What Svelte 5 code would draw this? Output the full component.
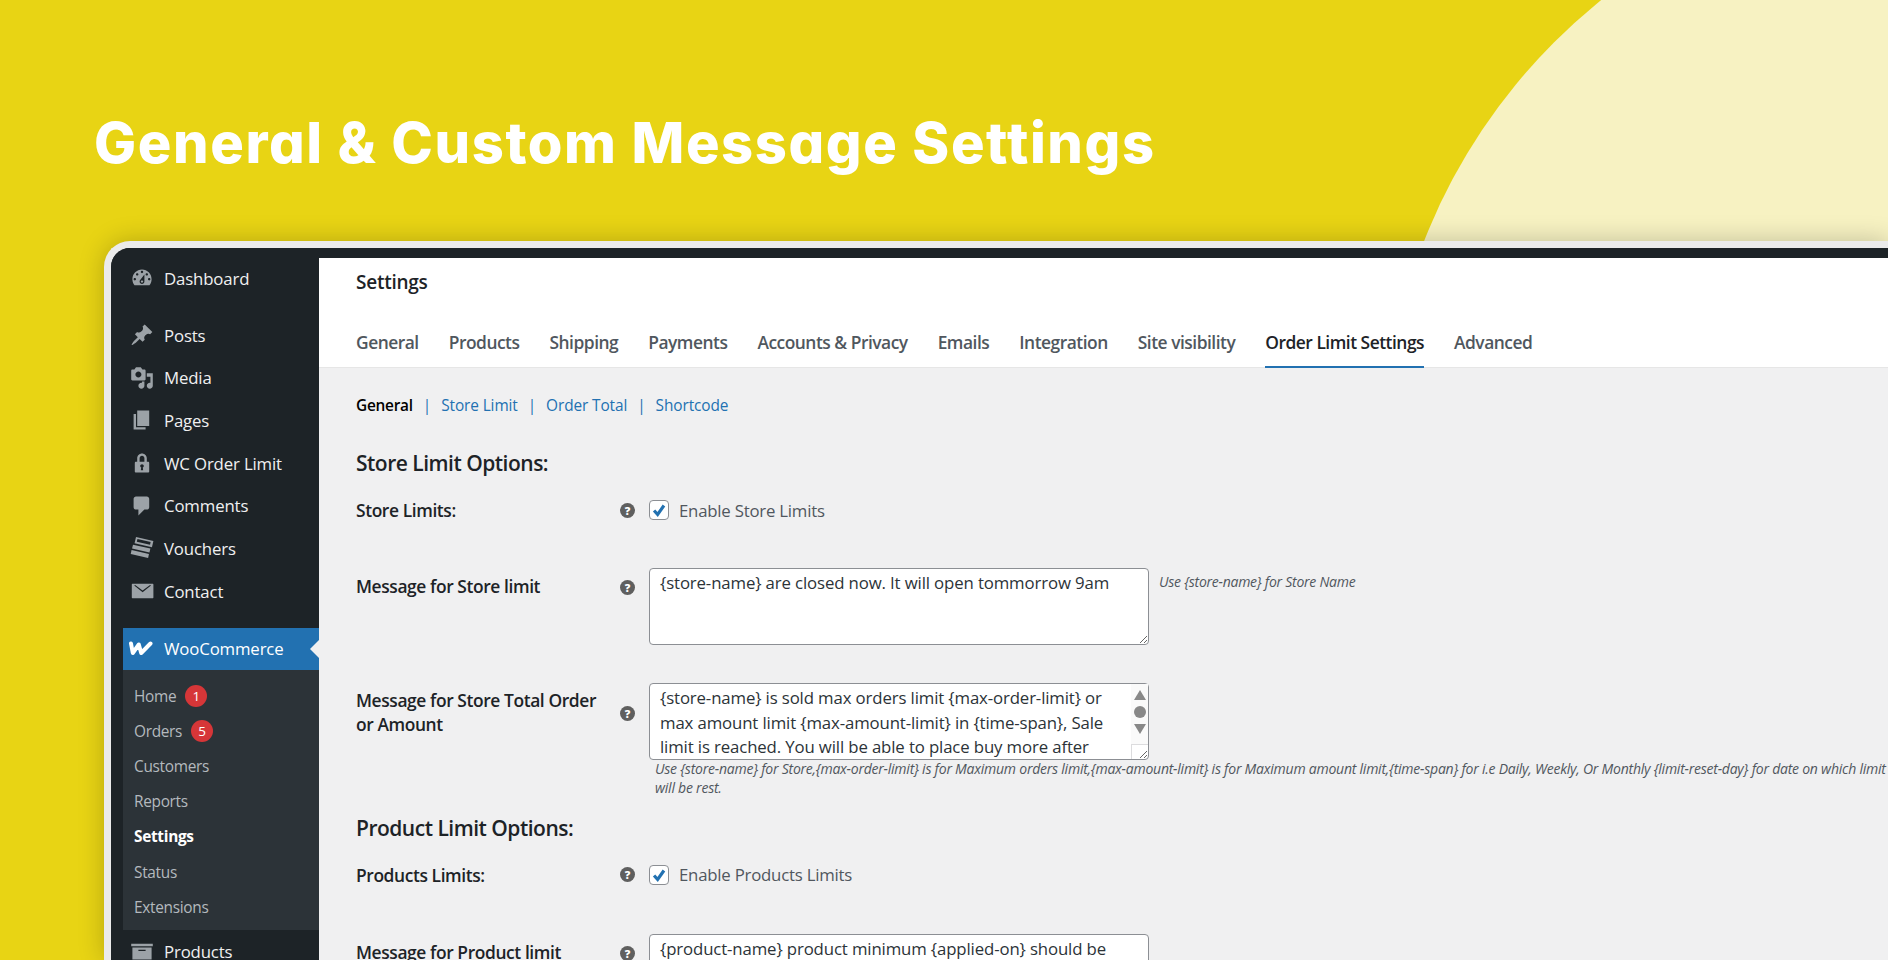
<script>
  const menuTop = [
    { label: 'Dashboard', icon: 'M3.76 16h12.48c1.1-1.37 1.76-3.11 1.76-5 0-4.42-3.58-8-8-8s-8 3.58-8 8c0 1.89.66 3.63 1.76 5zM10 4c.55 0 1 .45 1 1s-.45 1-1 1-1-.45-1-1 .45-1 1-1zM6 6c.55 0 1 .45 1 1s-.45 1-1 1-1-.45-1-1 .45-1 1-1zm8 0c.55 0 1 .45 1 1s-.45 1-1 1-1-.45-1-1 .45-1 1-1zm-5.37 5.55L12 7v6c0 1.1-.9 2-2 2s-2-.9-2-2c0-.57.24-1.08.63-1.45zM4 10c.55 0 1 .45 1 1s-.45 1-1 1-1-.45-1-1 .45-1 1-1zm12 0c.55 0 1 .45 1 1s-.45 1-1 1-1-.45-1-1 .45-1 1-1zm-5 3c0-.55-.45-1-1-1s-1 .45-1 1 .45 1 1 1 1-.45 1-1z' }
  ]
  const menuMain = [
    { label: 'Posts', icon: 'M10.44 3.02l1.82-1.82 6.36 6.35-1.83 1.82c-1.05-.68-2.48-.57-3.41.36l-.75.75c-.92.93-1.04 2.35-.35 3.41l-1.83 1.82-2.41-2.41-2.8 2.79c-.42.42-3.38 2.71-3.8 2.29s1.86-3.39 2.28-3.81l2.79-2.79L4.1 9.36l1.83-1.82c1.05.69 2.48.57 3.4-.36l.75-.75c.93-.92 1.05-2.35.36-3.41z' },
    { label: 'Media', icon: 'M13 11V4c0-.55-.45-1-1-1h-1.67L9 1H5L3.67 3H2c-.55 0-1 .45-1 1v7c0 .55.45 1 1 1h10c.55 0 1-.45 1-1zM7 4.5c1.38 0 2.5 1.12 2.5 2.5S8.38 9.5 7 9.5 4.5 8.38 4.5 7 5.62 4.5 7 4.5zM14 6h5v10.5c0 1.38-1.12 2.5-2.5 2.5S14 17.88 14 16.5s1.12-2.5 2.5-2.5c.17 0 .34.02.5.05V9h-3V6zm-4 8.05V13h2v3.5c0 1.38-1.12 2.5-2.5 2.5S7 17.88 7 16.5 8.12 14 9.5 14c.17 0 .34.02.5.05z' },
    { label: 'Pages', icon: 'M6 15V2h10v13H6zm-1 1h8v2H3V5h2v11z' },
    { label: 'WC Order Limit', icon: 'M14 9h1c.55 0 1 .45 1 1v7c0 .55-.45 1-1 1H5c-.55 0-1-.45-1-1v-7c0-.55.45-1 1-1h1V6c0-2.21 1.79-4 4-4s4 1.79 4 4v3zm-2 0V6c0-1.1-.9-2-2-2s-2 .9-2 2v3h4zm-1 7l-.36-2.15c.51-.24.86-.75.86-1.35 0-.83-.67-1.5-1.5-1.5s-1.5.67-1.5 1.5c0 .6.35 1.11.86 1.35L9 16h2z' },
    { label: 'Comments', icon: 'M5 2h9c1.1 0 2 .9 2 2v7c0 1.1-.9 2-2 2h-2l-5 5v-5H5c-1.1 0-2-.9-2-2V4c0-1.1.9-2 2-2z' },
    { label: 'Vouchers', icon: 'M5 .8l14.500 3.300-1.200 5.200L3.800 6zM6.200 2.500l-.5 2.300 11 2.500.5-2.300zM2.500 7.200l14.500 3.300-.8 3.300L1.700 10.500zM1.300 11.700l14.500 3.300-.7 3.300L.6 15z' },
    { label: 'Contact', icon: 'M2 4h17c.3 0 .5.2.5.5v11c0 .3-.2.5-.5.5H2c-.3 0-.5-.2-.5-.5v-11c0-.3.2-.5.5-.5zm1.500 1.500l7 5.500 7-5.500-.8-.5L10.500 9.500 4.300 5z' }
  ]
  const subMenu = [
    { label: 'Home', badge: 1 },
    { label: 'Orders', badge: 5 },
    { label: 'Customers' },
    { label: 'Reports' },
    { label: 'Settings', current: true },
    { label: 'Status' },
    { label: 'Extensions' }
  ]
  const tabs = ['General', 'Products', 'Shipping', 'Payments', 'Accounts & Privacy', 'Emails', 'Integration', 'Site visibility', 'Order Limit Settings', 'Advanced']
  const archive = 'M19 4v2H1V4h18zM2 7h16v10H2V7zm11 3V9H7v1h6z'
</script>

<div class="page">
  <div class="blob"></div>
  <h1>General &amp; Custom Message Settings</h1>

  <div class="frame">
    <aside class="sidebar">
      <ul class="menu first">
        {#each menuTop as item}
          <li><svg viewBox="0 0 20 20"><path d={item.icon} /></svg>{item.label}</li>
        {/each}
      </ul>
      <ul class="menu">
        {#each menuMain as item}
          <li><svg viewBox="0 0 20 20"><path d={item.icon} /></svg>{item.label}</li>
        {/each}
      </ul>
      <div class="woo">
        <svg class="woo-logo" viewBox="0 0 26 15"><path d="M3 2.500l1.800 9.500 6-8.500 2.400 8.500L22.500 2.500" /></svg>
        WooCommerce
      </div>
      <ul class="submenu">
        {#each subMenu as item}
          <li class:current={item.current}>
            {item.label}
            {#if item.badge}<span class="badge">{item.badge}</span>{/if}
          </li>
        {/each}
      </ul>
      <ul class="menu after">
        <li><svg viewBox="0 0 20 20"><path d={archive} /></svg>Products</li>
      </ul>
    </aside>

    <main class="content">
      <header class="head">
        <div class="title">Settings</div>
        <nav class="tabs">
          {#each tabs as tab}
            <span class="tab" class:active={tab === 'Order Limit Settings'}>{tab}</span>
          {/each}
        </nav>
      </header>

      <div class="body">
        <div class="subnav">
          <b>General</b><i>|</i><a href="#a">Store Limit</a><i>|</i><a href="#b">Order Total</a><i>|</i><a href="#c">Shortcode</a>
        </div>

        <h2 class="h-store">Store Limit Options:</h2>

        <div class="row r-check">
          <span class="lbl">Store Limits:</span>
          <span class="help">?</span>
          <label class="check"><span class="box"><svg viewBox="0 0 20 20"><path d="M4.500 10.500l4 4.500 7-10" /></svg></span>Enable Store Limits</label>
        </div>

        <div class="row r-msg1">
          <span class="lbl">Message for Store limit</span>
          <span class="help">?</span>
          <textarea class="ta" readonly>&#123;store-name&#125; are closed now. It will open tommorrow 9am</textarea>
          <span class="note">Use &#123;store-name&#125; for Store Name</span>
        </div>

        <div class="row r-msg2">
          <span class="lbl">Message for Store Total Order or Amount</span>
          <span class="help">?</span>
          <div class="ta-wrap">
            <textarea class="ta scrolled" readonly>&#123;store-name&#125; is sold max orders limit &#123;max-order-limit&#125; or max amount limit &#123;max-amount-limit&#125; in &#123;time-span&#125;, Sale limit is reached. You will be able to place buy more after</textarea>
            <div class="bar">
              <span class="up"></span><span class="dot"></span><span class="down"></span>
            </div>
            <div class="corner"></div>
          </div>
        </div>
        <p class="long-note">Use &#123;store-name&#125; for Store,&#123;max-order-limit&#125; is for Maximum orders limit,&#123;max-amount-limit&#125; is for Maximum amount limit,&#123;time-span&#125; for i.e Daily, Weekly, Or Monthly &#123;limit-reset-day&#125; for date on which limit will be rest.</p>

        <h2 class="h-product">Product Limit Options:</h2>

        <div class="row r-check">
          <span class="lbl">Products Limits:</span>
          <span class="help">?</span>
          <label class="check"><span class="box"><svg viewBox="0 0 20 20"><path d="M4.500 10.500l4 4.500 7-10" /></svg></span>Enable Products Limits</label>
        </div>

        <div class="row r-msg3">
          <span class="lbl">Message for Product limit</span>
          <span class="help">?</span>
          <textarea class="ta" readonly>&#123;product-name&#125; product minimum &#123;applied-on&#125; should be</textarea>
        </div>
      </div>
    </main>
  </div>
</div>

<style>
  :global(body) {
    margin: 0;
    background: #e8d414;
  }

  .page {
    position: relative;
    width: 1888px;
    height: 960px;
    overflow: hidden;
    background: #e8d414;
    font-family: "Open Sans", "Noto Sans", sans-serif;
    color: #1d2327;
  }

  .blob {
    position: absolute;
    left: 1384px;
    top: -128px;
    width: 1162px;
    height: 1162px;
    border-radius: 50%;
    background: #f7f2c2;
  }

  h1 {
    position: relative;
    margin: 0;
    height: 241px;
    padding: 103px 0 0 94px;
    box-sizing: border-box;
    font-family: Inter, sans-serif;
    font-feature-settings: "cv11";
    font-size: 56px;
    line-height: 80px;
    font-weight: 800;
    letter-spacing: 1.6px;
    color: #fff;
  }

  .frame {
    position: relative;
    display: flex;
    margin-left: 104px;
    height: 719px;
    box-sizing: border-box;
    border: 7px solid #ebebeb;
    border-width: 7px 0 0 7px;
    border-top-left-radius: 26px;
    background: #1d2327;
    box-shadow: 0 0 26px rgba(0, 0, 0, 0.22);
    padding-top: 10px;
    overflow: hidden;
  }

  .sidebar {
    flex: 0 0 208px;
    margin-top: -10px;
    background: #1d2327;
    font-size: 16.8px;
    letter-spacing: -0.15px;
    color: #f0f0f1;
  }

  .menu {
    list-style: none;
    margin: 0;
    padding: 0;
  }

  .menu li {
    display: flex;
    align-items: center;
    height: 42.7px;
    padding-left: 19px;
  }

  .menu svg {
    flex: 0 0 24px;
    width: 24px;
    height: 24px;
    margin-right: 10px;
    fill: #9ca2a7;
  }

  .first {
    padding: 9px 0 14px;
  }

  .woo {
    display: flex;
    align-items: center;
    position: relative;
    margin: 15px 0 0 12px;
    height: 42px;
    padding-left: 5px;
    background: #2271b1;
    color: #fff;
  }

  .woo::after {
    content: "";
    position: absolute;
    right: 0;
    top: 12px;
    border: 9px solid transparent;
    border-right-color: #f0f0f1;
    border-left-width: 0;
  }

  .woo-logo {
    width: 26px;
    height: 15px;
    margin-right: 10px;
    fill: none;
    stroke: #fff;
    stroke-width: 4;
    stroke-linejoin: round;
    stroke-linecap: round;
  }

  .submenu {
    list-style: none;
    margin: 0 0 0 12px;
    padding: 9px 0 5px;
    background: #2c3338;
    font-size: 15.4px;
    letter-spacing: -0.3px;
    color: #b4b9be;
  }

  .submenu li {
    display: flex;
    align-items: center;
    height: 35.2px;
    padding-left: 11px;
  }

  .submenu .current {
    color: #fff;
    font-weight: 700;
  }

  .badge {
    display: inline-flex;
    align-items: center;
    justify-content: center;
    width: 22px;
    height: 22px;
    margin-left: 9px;
    border-radius: 50%;
    background: #d63638;
    color: #fff;
    font-size: 13.5px;
    letter-spacing: 0;
  }

  .content {
    flex: 1;
    min-width: 0;
    background: #f0f0f1;
  }

  .head {
    height: 110px;
    box-sizing: border-box;
    padding: 0 0 0 37px;
    background: #fff;
    border-bottom: 1px solid #e6e6e6;
  }

  .title {
    padding-top: 10px;
    line-height: 28px;
    font-size: 19px;
    font-weight: 600;
    letter-spacing: -0.25px;
    color: #1d2327;
  }

  .tabs {
    display: flex;
    gap: 30px;
    margin-top: 26px;
  }

  .tab {
    height: 46px;
    line-height: 40px;
    box-sizing: border-box;
    font-size: 17.4px;
    font-weight: 600;
    letter-spacing: -0.49px;
    color: #50575e;
  }

  .tab.active {
    color: #1d2327;
    border-bottom: 2px solid #2271b1;
  }

  .body {
    padding: 0 0 0 37px;
  }

  .subnav {
    display: flex;
    align-items: center;
    padding-top: 26px;
    height: 22px;
    font-size: 15.4px;
    letter-spacing: -0.1px;
  }

  .subnav b {
    font-weight: 600;
    letter-spacing: -0.25px;
    color: #000;
  }

  .subnav i {
    margin: 0 10px;
    font-style: normal;
    color: #2271b1;
  }

  .subnav a {
    color: #2271b1;
    text-decoration: none;
  }

  h2 {
    margin: 0;
    font-size: 21px;
    line-height: 28px;
    font-weight: 600;
    letter-spacing: -0.5px;
    color: #1d2327;
  }

  .h-store {
    margin-top: 33px;
  }

  .h-product {
    margin-top: 16px;
  }

  .row {
    display: flex;
    font-size: 17.4px;
    letter-spacing: -0.4px;
  }

  .lbl {
    flex: 0 0 264px;
    font-weight: 600;
    line-height: 24px;
    color: #1d2327;
  }

  .help {
    flex: 0 0 15px;
    width: 15px;
    height: 15px;
    margin: 0 14px 0 0;
    border-radius: 50%;
    background: #5f5f5f;
    color: #fff;
    font-size: 11px;
    font-weight: 800;
    line-height: 15px;
    text-align: center;
    letter-spacing: 0;
  }

  .r-check {
    align-items: center;
    height: 24px;
    margin-top: 21px;
  }

  .check {
    display: flex;
    align-items: center;
    font-size: 16.8px;
    font-weight: 400;
    letter-spacing: -0.22px;
    color: #50575e;
  }

  .box {
    width: 20px;
    height: 20px;
    box-sizing: border-box;
    margin-right: 10px;
    border: 1px solid #8c8f94;
    border-radius: 4px;
    background: #fff;
  }

  .box svg {
    display: block;
    fill: none;
    stroke: #2271b1;
    stroke-width: 3.5;
  }

  .ta {
    display: block;
    width: 500px;
    height: 77px;
    box-sizing: border-box;
    margin: 0;
    padding: 2px 10px;
    border: 1px solid #8c8f94;
    border-radius: 4px;
    background: #fff;
    font-family: inherit;
    font-size: 16.8px;
    letter-spacing: -0.13px;
    line-height: 24.7px;
    color: #2c3338;
    outline: none;
    overflow: hidden;
    resize: both;
  }

  .r-msg1 {
    margin-top: 46px;
  }

  .r-msg1 .lbl {
    padding-top: 6px;
  }

  .r-msg1 .help {
    margin-top: 12px;
  }

  .note {
    margin: 4px 0 0 10px;
    font-size: 14px;
    font-style: italic;
    letter-spacing: -0.25px;
    color: #50575e;
  }

  .r-msg2 {
    margin-top: 38px;
  }

  .r-msg2 .lbl {
    padding-top: 5px;
    padding-right: 8px;
    box-sizing: border-box;
  }

  .r-msg2 .help {
    margin-top: 23px;
  }

  .ta-wrap {
    position: relative;
  }

  .scrolled {
    padding-right: 24px;
  }

  .bar {
    position: absolute;
    right: 1px;
    top: 1px;
    bottom: 16px;
    width: 17px;
    display: flex;
    flex-direction: column;
    align-items: center;
    gap: 6px;
    padding-top: 6px;
    box-sizing: border-box;
    background: #fafafa;
  }

  .up {
    border: 6.500px solid transparent;
    border-top: 0;
    border-bottom: 10px solid #888;
  }

  .dot {
    width: 12px;
    height: 12px;
    border-radius: 50%;
    background: #888;
  }

  .down {
    border: 6.500px solid transparent;
    border-bottom: 0;
    border-top: 10px solid #888;
  }

  .corner {
    position: absolute;
    right: 1px;
    bottom: 1px;
    width: 17px;
    height: 15px;
    box-sizing: border-box;
    border: solid #dcdcde;
    border-width: 1px 0 0 1px;
    pointer-events: none;
  }

  .long-note {
    margin: -1px 0 0 299px;
    width: 1233px;
    font-size: 14px;
    font-style: italic;
    line-height: 19.4px;
    letter-spacing: -0.23px;
    color: #50575e;
  }

  .r-msg3 {
    margin-top: 47px;
  }

  .r-msg3 .lbl {
    padding-top: 6px;
  }

  .r-msg3 .help {
    margin-top: 12px;
  }
</style>
